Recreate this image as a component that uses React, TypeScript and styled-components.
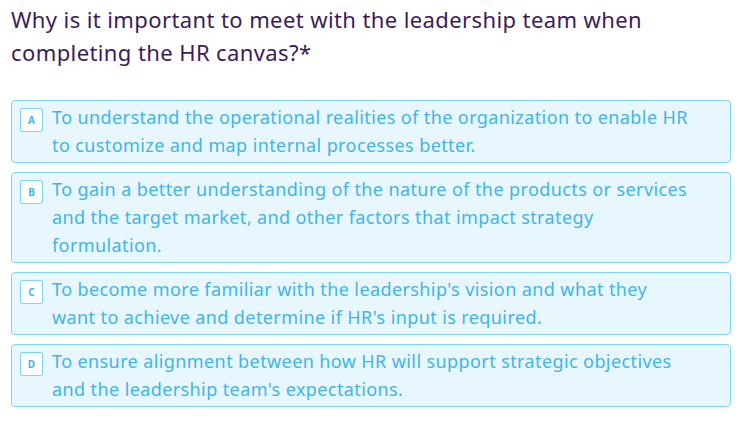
import React from "react";
import styled, { createGlobalStyle } from "styled-components";

const OPTIONS = [
    { key: "A", text: "To understand the operational realities of the organization to enable HR to customize and map internal processes better." },
    { key: "B", text: "To gain a better understanding of the nature of the products or services and the target market, and other factors that impact strategy formulation." },
    { key: "C", text: "To become more familiar with the leadership's vision and what they want to achieve and determine if HR's input is required." },
    { key: "D", text: "To ensure alignment between how HR will support strategic objectives and the leadership team's expectations." },
];

const Global = createGlobalStyle`
    html, body { margin: 0; padding: 0; background: #fff; }
    body { font-family: "Noto Sans", "Open Sans", sans-serif; }
`;

export default function App ()
{
    return (
        <Page>
            <Global/>
            <Question>Why is it important to meet with the leadership team when completing the HR canvas?*</Question>
            <List>
                {OPTIONS.map(o => (
                    <Choice key={o.key}>
                        <Key>{o.key}</Key>
                        <Label>{o.text}</Label>
                    </Choice>
                ))}
            </List>
        </Page>
    );
}

const Page = styled.div`
    width: 738px;
    padding: 3px 7px 0 11px;
    box-sizing: border-box;
`;

const Question = styled.h1`
    margin: 0;
    width: 670px;
    font-size: 22px;
    font-weight: 400;
    line-height: 33px;
    letter-spacing: 0.4px;
    color: #3a1c5c;
`;

const List = styled.div`
    display: flex;
    flex-direction: column;
    gap: 9px;
    margin-top: 31px;
`;

const Choice = styled.div`
    display: flex;
    align-items: flex-start;
    gap: 9px;
    padding: 2px 8px 3px 8px;
    border: 1px solid #7fd3f4;
    border-radius: 4px;
    background: #e8f7fd;
`;

const Key = styled.span`
    flex: none;
    width: 21px;
    height: 22px;
    margin-top: 5px;
    display: flex;
    align-items: center;
    justify-content: center;
    background: #fff;
    border: 1px solid #7fd3f4;
    border-radius: 2px;
    font-size: 10px;
    font-weight: 700;
    color: #3fb5ea;
`;

const Label = styled.span`
    width: 641px;
    font-size: 18px;
    line-height: 28px;
    letter-spacing: 0.4px;
    color: #3fb5ea;
`;
